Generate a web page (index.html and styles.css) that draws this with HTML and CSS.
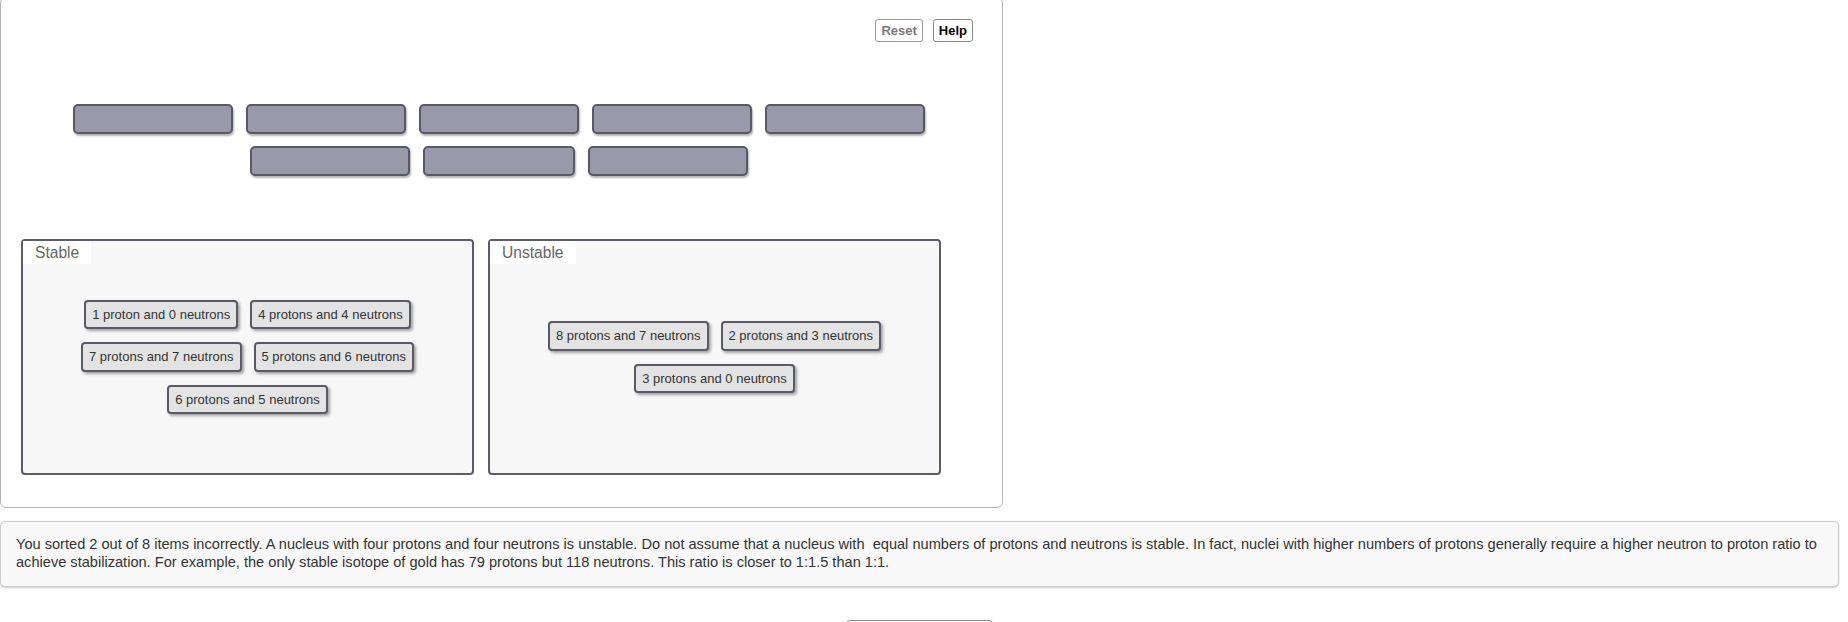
FILE: index.html
```html
<!DOCTYPE html>
<html lang="en">
<head>
<meta charset="utf-8">
<title>Sorting activity</title>
<link rel="stylesheet" href="styles.css">
</head>
<body>
<div class="page">
  <section class="panel">
    <div class="toolbar">
      <button class="tool-btn tool-btn--disabled" type="button">Reset</button>
      <button class="tool-btn" type="button">Help</button>
    </div>
    <div class="slots">
      <div class="slot"></div>
      <div class="slot"></div>
      <div class="slot"></div>
      <div class="slot"></div>
      <div class="slot"></div>
      <div class="slot"></div>
      <div class="slot slot--narrow"></div>
      <div class="slot"></div>
    </div>
    <div class="bins">
      <div class="bin">
        <div class="bin-label">Stable</div>
        <div class="chips">
          <div class="chip">1 proton and 0 neutrons</div>
          <div class="chip">4 protons and 4 neutrons</div>
          <div class="chip">7 protons and 7 neutrons</div>
          <div class="chip">5 protons and 6 neutrons</div>
          <div class="chip">6 protons and 5 neutrons</div>
        </div>
      </div>
      <div class="bin">
        <div class="bin-label">Unstable</div>
        <div class="chips">
          <div class="chip">8 protons and 7 neutrons</div>
          <div class="chip">2 protons and 3 neutrons</div>
          <div class="chip">3 protons and 0 neutrons</div>
        </div>
      </div>
    </div>
  </section>
  <div class="feedback">You sorted 2 out of 8 items incorrectly. A nucleus with four protons and four neutrons is unstable. Do not assume that a nucleus with&nbsp; equal numbers of protons and neutrons is stable. In fact, nuclei with higher numbers of protons generally require a higher neutron to proton ratio to achieve stabilization. For example, the only stable isotope of gold has 79 protons but 118 neutrons. This ratio is closer to 1:1.5 than 1:1.</div>
  <div class="actions">
    <button class="submit-btn" type="button">Submit</button>
  </div>
</div>
</body>
</html>
```
FILE: styles.css
```css
html, body {
  margin: 0;
  padding: 0;
  background: #ffffff;
}

body {
  font-family: "Liberation Sans", Arial, sans-serif;
  color: #333333;
  overflow: hidden;
}

.page {
  width: 1839px;
}

.panel {
  box-sizing: border-box;
  width: 1003px;
  margin-top: -3px;
  border: 1px solid #b4b4b4;
  border-radius: 6px;
  background: #ffffff;
  padding: 21px 0 32px 0;
}

.toolbar {
  display: flex;
  justify-content: flex-end;
  gap: 10px;
  padding-right: 29px;
}

.tool-btn {
  box-sizing: border-box;
  height: 23px;
  padding: 0 5px;
  border: 1px solid #8a8a8a;
  border-radius: 3px;
  background: #ffffff;
  font-family: "Liberation Sans", Arial, sans-serif;
  font-size: 13px;
  font-weight: bold;
  color: #000000;
  line-height: 21px;
}

.tool-btn--disabled {
  color: #7a7a7a;
  border-color: #9a9a9a;
}

.slots {
  display: flex;
  flex-wrap: wrap;
  justify-content: center;
  gap: 12px 13px;
  margin-top: 62px;
  padding-right: 6px;
}

.slot {
  box-sizing: border-box;
  width: 160px;
  height: 30px;
  border: 2px solid #595866;
  border-radius: 5px;
  background: #9a99a9;
  box-shadow: 1px 2px 2px rgba(0, 0, 0, 0.3);
}

.slot--narrow {
  width: 152px;
}

.bins {
  display: flex;
  gap: 14px;
  margin-top: 63px;
  padding-left: 20px;
}

.bin {
  box-sizing: border-box;
  width: 453px;
  height: 236px;
  border: 2px solid #5c5b68;
  border-radius: 4px;
  background: #f7f7f7;
  display: grid;
  place-items: center;
}

.bin-label,
.chips {
  grid-area: 1 / 1;
}

.bin-label {
  justify-self: start;
  align-self: start;
  background: #ffffff;
  color: #666666;
  font-size: 15.6px;
  line-height: 19px;
  padding: 2px 12px;
}

.chips {
  display: flex;
  flex-wrap: wrap;
  justify-content: center;
  gap: 13px 12px;
  width: 100%;
}

.chip {
  border: 2px solid #5a5966;
  border-radius: 4px;
  background: #e3e3e3;
  box-shadow: 2px 2px 3px rgba(0, 0, 0, 0.35);
  color: #333333;
  font-size: 13px;
  line-height: 17.5px;
  padding: 4px 6px;
  white-space: nowrap;
}

.feedback {
  box-sizing: border-box;
  width: 1839px;
  margin-top: 13px;
  border: 1px solid #cccccc;
  border-radius: 5px;
  background: #f8f8f8;
  box-shadow: 0 1px 2px rgba(0, 0, 0, 0.2);
  padding: 13px 5px 15px 15px;
  font-size: 14.6px;
  line-height: 18px;
  color: #333333;
}

.actions {
  display: flex;
  justify-content: center;
  margin-top: 33px;
}

.submit-btn {
  box-sizing: border-box;
  width: 147px;
  height: 30px;
  border: 1px solid #8a8a8a;
  border-radius: 4px;
  background: #ffffff;
  font-family: "Liberation Sans", Arial, sans-serif;
  font-size: 14px;
  color: #555555;
}
```
